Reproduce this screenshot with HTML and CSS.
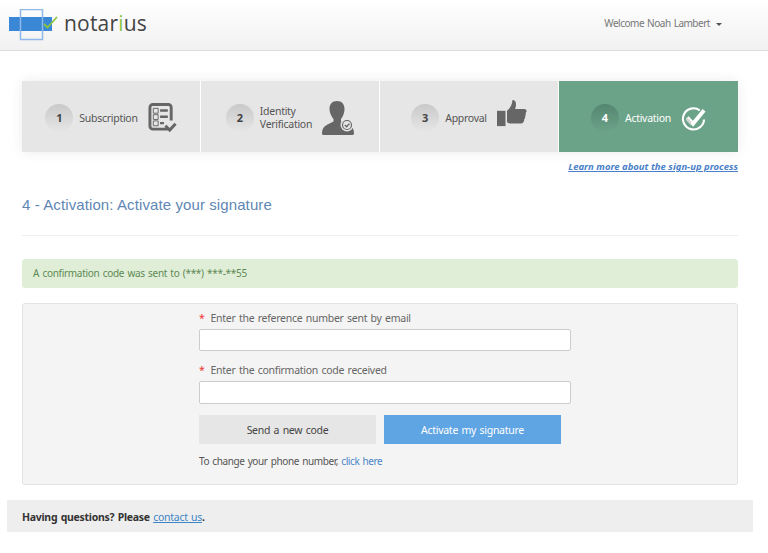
FILE: index.html
```html
<!DOCTYPE html>
<html lang="en">
<head>
    <meta charset="UTF-8">
    <meta name="viewport" content="width=device-width, initial-scale=1.0">
    <title>Notarius - Activation</title>
    <link rel="stylesheet" href="styles.css">
</head>
<body>
    <header class="top-bar">
        <div class="logo">
            <svg class="logo-mark" width="56" height="40" viewBox="0 0 56 40">
                <rect x="0" y="8" width="43" height="14" fill="#3a87d6"/>
                <rect x="11.500" y="0.500" width="22" height="30" fill="none" stroke="#8fb8ea" stroke-width="1.500"/>
                <path d="M35 15l3.500 3.500L48 8" fill="none" stroke="#8cc63f" stroke-width="1.800"/>
            </svg>
            <span class="logo-text">notar<span class="logo-i">i</span>us</span>
        </div>
        <div class="welcome">Welcome Noah Lambert <span class="caret"></span></div>
    </header>

    <main class="content">
        <div class="steps">
            <div class="step">
                <span class="step-num">1</span>
                <span class="step-name">Subscription</span>
                <svg class="step-icon" width="29" height="31" viewBox="0 0 30 32">
                    <path d="M21 27H5a3 3 0 0 1-3-3V4.500a3 3 0 0 1 3-3h16a3 3 0 0 1 3 3V18" fill="none" stroke="#666" stroke-width="3"/>
                    <path d="M5.500 5.500h5v5h-5zM5.500 12h5v5h-5zM5.500 18.500h5v5h-5z" fill="none" stroke="#666" stroke-width="1"/>
                    <path d="M12.500 6.500h8v2.500h-8zM12.500 13h8v2.500h-8zM12.500 19.500h4v2.500h-4z" fill="#666"/>
                    <path d="M18 23.500l4.500 4.500 6-6.500" fill="none" stroke="#666" stroke-width="3"/>
                </svg>
            </div>
            <div class="step">
                <span class="step-num">2</span>
                <span class="step-name">Identity<br>Verification</span>
                <svg class="step-icon" width="32" height="34" viewBox="0 0 32 34">
                    <path d="M15 0c5 0 7.500 3.500 7.500 8 0 4-1.500 7.500-3.500 10v2.500l7 3c4 1.500 6 4.500 6 8.500 0 1.500-.5 2-2 2H1.500C.5 34 0 33.500 0 32c0-4 2-7 5.500-8.500l6-3V18C9.500 15.500 7.500 12 7.500 8 7.500 3.500 10 0 15 0z" fill="#666"/>
                    <circle cx="25" cy="24" r="6.500" fill="#e6e6e6"/>
                    <circle cx="25" cy="24" r="4.500" fill="none" stroke="#666" stroke-width="1.200"/>
                    <path d="M22.800 24l1.800 1.800 2.800-3.200" fill="none" stroke="#666" stroke-width="1.400"/>
                </svg>
            </div>
            <div class="step step-up">
                <span class="step-num">3</span>
                <span class="step-name">Approval</span>
                <svg class="step-icon" width="30" height="27" viewBox="0 0 30 30" preserveAspectRatio="none">
                    <rect x="0" y="12" width="8.500" height="17" fill="#666"/>
                    <path d="M10 12c3-3 5-6 5.500-12 3 0 3.500 3 3.500 5 0 2-.5 4-1 5h9c2 0 2.500 1 2.500 2.500 0 1-.5 1.500-1 2 .5 1 .5 2.500-.5 3.500.5 1 .3 2.300-.8 3 .3 1.500-.7 5-2.700 5H13c-1.500 0-3-.5-3-2z" fill="#666"/>
                </svg>
            </div>
            <div class="step step-active">
                <span class="step-num">4</span>
                <span class="step-name">Activation</span>
                <svg class="step-icon" width="25" height="25" viewBox="0 0 26 26">
                    <path d="M19.500 3.500A11 11 0 1 0 24 13" fill="none" stroke="#fff" stroke-width="2.200" transform="translate(0 1)"/>
                    <path d="M6.500 12l6 6.500L24 4.500" fill="none" stroke="#fff" stroke-width="4"/>
                    <path d="M6.500 12l4 4.500v3.500l-5-5z" fill="#d5d5d5"/>
                </svg>
            </div>
        </div>

        <div class="learn-more"><a href="#">Learn more about the sign-up process</a></div>

        <h1 class="page-title">4 - Activation: Activate your signature</h1>
        <hr class="divider">

        <div class="alert">A confirmation code was sent to (***) ***-**55</div>

        <form class="panel">
            <div class="form-col">
                <label class="field-label" for="refNumber"><span class="req">*</span>Enter the reference number sent by email</label>
                <input class="field-input" type="text" id="refNumber">

                <label class="field-label second" for="confCode"><span class="req">*</span>Enter the confirmation code received</label>
                <input class="field-input" type="text" id="confCode">

                <div class="buttons">
                    <button type="button" class="btn btn-grey">Send a new code</button>
                    <button type="button" class="btn btn-blue">Activate my signature</button>
                </div>

                <p class="change-phone">To change your phone number, <a href="#">click here</a></p>
            </div>
        </form>
    </main>

    <footer class="footer">Having questions? Please <a href="#">contact us</a>.</footer>
</body>
</html>
```

FILE: styles.css
```css
body {
    margin: 0;
    height: 553px;
    overflow: hidden;
    background: #fff;
    font-family: "Noto Sans", "DejaVu Sans", sans-serif;
    font-size: 10.500px;
    letter-spacing: -0.28px;
    word-spacing: 1px;
    color: #555;
}

.top-bar {
    display: flex;
    justify-content: space-between;
    height: 50px;
    background: linear-gradient(#fff, #f1f1f1);
    border-bottom: 1px solid #ddd;
}

.logo {
    display: flex;
    align-items: flex-start;
    padding: 9px 0 0 9px;
}

.logo-mark {
    display: block;
}

.logo-text {
    margin-left: -1px;
    font-family: "Open Sans", sans-serif;
    font-size: 21px;
    line-height: 28px;
    letter-spacing: 0.2px;
    color: #444;
}

.logo-i {
    color: #8cc63f;
}

.welcome {
    padding: 15px 46px 0 0;
    line-height: 16px;
    font-size: 10px;
    letter-spacing: -0.5px;
    color: #777;
}

.caret {
    display: inline-block;
    margin-left: 3px;
    vertical-align: middle;
    border-top: 3px solid #555;
    border-left: 3px solid transparent;
    border-right: 3px solid transparent;
}

.content {
    padding: 30px 30px 0 22px;
}

.steps {
    display: grid;
    grid-template-columns: 178px 178px 178px 179px;
    gap: 1px;
    height: 71px;
    box-shadow: 0 0 12px rgba(0, 0, 0, 0.08);
}

.step {
    display: flex;
    align-items: center;
    justify-content: center;
    padding-top: 3px;
    background: #e6e6e6;
    color: #555;
}

.step-num {
    flex: none;
    width: 28px;
    height: 28px;
    line-height: 28px;
    border-radius: 50%;
    text-align: center;
    font-weight: bold;
    font-size: 11px;
    letter-spacing: 0;
    color: #444;
    background: linear-gradient(#c9c9c9, #e6e6e6);
}

.step-name {
    margin-left: 6px;
    line-height: 13px;
}

.step-icon {
    display: block;
    flex: none;
    margin-left: 10px;
}

.step-up .step-icon {
    margin-top: -9px;
}

.step-active {
    background: #6ba388;
    color: #fff;
}

.step-active .step-num {
    color: #fff;
    background: linear-gradient(#558670, #6ba388);
}

.learn-more {
    margin-top: 8px;
    line-height: 14px;
    text-align: right;
    font-size: 9.500px;
    font-style: italic;
    font-weight: bold;
    letter-spacing: 0;
    word-spacing: 0;
}

.learn-more a {
    color: #4a7fc9;
}

.page-title {
    margin: 21px 0 0;
    font-family: "Liberation Sans", Arial, sans-serif;
    font-size: 15px;
    font-weight: normal;
    line-height: 20px;
    letter-spacing: 0.1px;
    word-spacing: 0;
    color: #5f87b5;
}

.divider {
    margin: 20px 0 0;
    border: 0;
    border-top: 1px solid #eee;
}

.alert {
    margin-top: 23px;
    height: 29px;
    line-height: 28px;
    padding-left: 11px;
    border-radius: 3px;
    font-size: 10px;
    letter-spacing: -0.3px;
    background: #e0eed8;
    color: #5f8a55;
}

.panel {
    margin-top: 15px;
    height: 180px;
    border: 1px solid #e3e3e3;
    border-radius: 3px;
    background: #f4f4f4;
    padding-left: 176px;
}

.form-col {
    width: 372px;
}

.field-label {
    display: block;
    margin-top: 6px;
    line-height: 16px;
    color: #666;
}

.field-label.second {
    margin-top: 11px;
}

.req {
    margin-right: 6px;
    color: #e33;
}

.field-input {
    display: block;
    box-sizing: border-box;
    width: 372px;
    height: 22px;
    margin-top: 3px;
    border: 1px solid #ccc;
    border-radius: 2px;
    background: #fff;
}

.field-input:last-of-type {
    height: 23px;
}

.buttons {
    display: flex;
    gap: 8px;
    margin-top: 11px;
}

.btn {
    width: 177px;
    height: 29px;
    border: none;
    font-family: inherit;
    font-size: 10.500px;
    letter-spacing: -0.28px;
    word-spacing: 1px;
}

.btn-grey {
    background: #e6e6e6;
    color: #444;
}

.btn-blue {
    background: #5fa5e3;
    color: #fff;
}

.change-phone {
    margin: 9px 0 0;
    line-height: 16px;
    font-size: 10px;
    letter-spacing: -0.4px;
    color: #555;
}

.change-phone a {
    color: #4a86c9;
    text-decoration: none;
}

.footer {
    margin: 15px 15px 0 7px;
    height: 32px;
    line-height: 34px;
    padding-left: 15px;
    background: #eee;
    font-weight: bold;
    color: #333;
}

.footer a {
    font-weight: normal;
    color: #3d85c6;
}
```
